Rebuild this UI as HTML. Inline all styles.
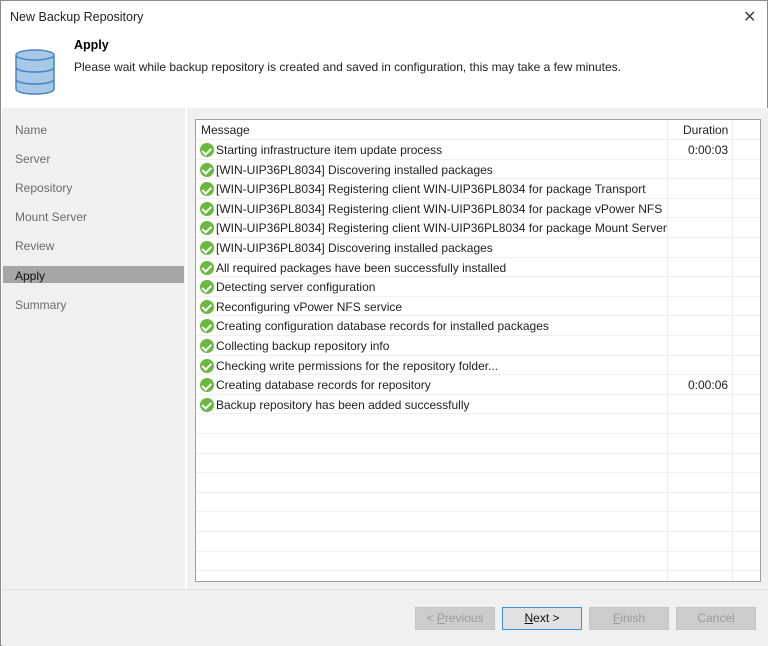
<!DOCTYPE html><html><head><style>
*{margin:0;padding:0;box-sizing:border-box}
body{width:768px;height:646px;background:#fff;font-family:"Liberation Sans",sans-serif;font-size:12px;color:#222;position:relative;overflow:hidden}
.win{position:absolute;left:0;top:0;width:768px;height:646px;border:1px solid #8a8a8a}
.title{position:absolute;left:9px;top:9px;font-size:12.5px;color:#222}
.close{position:absolute;left:742px;top:6px;font-size:16px;color:#444;font-weight:300}
.h1{position:absolute;left:73px;top:37px;font-weight:bold;font-size:12.5px;color:#000}
.h2{position:absolute;left:73px;top:59px;font-size:12px;color:#222}
.left{position:absolute;left:1px;top:107px;width:183px;height:481px;background:#f0f0f0}
.nav{position:absolute;left:14px;font-size:12px;color:#6b6b6b}
.sel{position:absolute;left:2px;top:265px;width:181px;height:17px;background:#a6a6a6}
.right{position:absolute;left:186px;top:107px;width:581px;height:481px;background:#f0f0f0}
.list{position:absolute;left:194px;top:118px;width:566px;height:463px;background:#fff;border:1px solid #a0a0a0}
.row{position:absolute;left:0;width:564px;height:19.6px;border-bottom:1px solid #f0f0f0;white-space:nowrap}
.row span{position:absolute;top:3px}
.vl{position:absolute;top:0;width:1px;height:461px;background:#e8ecf2}
.ic{position:absolute;left:4px;top:3px;width:14px;height:14px;border-radius:50%;background:#6ab83f}
.ic:after{content:"";position:absolute;left:3.5px;top:2.5px;width:3.5px;height:6.5px;border:solid #fff;border-width:0 2px 2px 0;transform:rotate(45deg)}
.bot{position:absolute;left:1px;top:588px;width:766px;height:57px;background:#f0f0f0;border-top:1px solid #e0e0e0}
.btn{position:absolute;top:606px;width:80px;height:23px;background:#cccccc;border:1px solid #c4c4c4;color:#9a9a9a;text-align:center;line-height:21px;font-size:12px}
.nx{background:#e1e1e1;border:1px solid #3d8fe0;color:#111}
</style></head><body><div class="win">
<div class="title">New Backup Repository</div>
<div class="close">✕</div>
<svg style="position:absolute;left:14px;top:46px" width="40" height="48" viewBox="0 0 40 48">
<g fill="#a8c8e8" stroke="#4a86c0" stroke-width="1.5">
<path d="M1 34v8c0 3 8 5 19 5s19-2 19-5v-8z"/><path d="M1 22v10c0 3 8 5 19 5s19-2 19-5V22z"/><path d="M1 10v10c0 3 8 5 19 5s19-2 19-5V10z"/><ellipse cx="20" cy="8" rx="19" ry="5"/></g></svg>
<div class="h1">Apply</div>
<div class="h2">Please wait while backup repository is created and saved in configuration, this may take a few minutes.</div>
<div class="left"></div>
<div class="sel"></div>
<div class="nav" style="top:122px">Name</div>
<div class="nav" style="top:151px">Server</div>
<div class="nav" style="top:180px">Repository</div>
<div class="nav" style="top:209px">Mount Server</div>
<div class="nav" style="top:238px">Review</div>
<div class="nav" style="top:268px;color:#111">Apply</div>
<div class="nav" style="top:297px">Summary</div>
<div class="right"></div>
<div class="list">
<div class="vl" style="left:471px"></div><div class="vl" style="left:536px"></div>
<div class="row" style="top:0"><span style="left:5px">Message</span><span style="left:487px">Duration</span></div>
</div>
<div id="rows" style="position:absolute;left:195px;top:139px"></div>
<div class="bot"></div>
<div class="btn" style="left:414px">&lt; <u>P</u>revious</div>
<div class="btn nx" style="left:501px"><u>N</u>ext &gt;</div>
<div class="btn" style="left:588px"><u>F</u>inish</div>
<div class="btn" style="left:675px">Cancel</div>
</div>
<script>
var m=["Starting infrastructure item update process","[WIN-UIP36PL8034] Discovering installed packages","[WIN-UIP36PL8034] Registering client WIN-UIP36PL8034 for package Transport","[WIN-UIP36PL8034] Registering client WIN-UIP36PL8034 for package vPower NFS","[WIN-UIP36PL8034] Registering client WIN-UIP36PL8034 for package Mount Server","[WIN-UIP36PL8034] Discovering installed packages","All required packages have been successfully installed","Detecting server configuration","Reconfiguring vPower NFS service","Creating configuration database records for installed packages","Collecting backup repository info","Checking write permissions for the repository folder...","Creating database records for repository","Backup repository has been added successfully"];
var h="";for(var i=0;i<22;i++){var t=m[i];h+='<div class="row" style="top:'+(i*19.6)+'px">'+(t?'<div class="ic"></div><span style="left:20px">'+t+'</span>':'')+(i==0?'<span style="left:492px">0:00:03</span>':'')+(i==12?'<span style="left:492px">0:00:06</span>':'')+'</div>';}
document.getElementById("rows").innerHTML=h;
</script>
</body></html>
